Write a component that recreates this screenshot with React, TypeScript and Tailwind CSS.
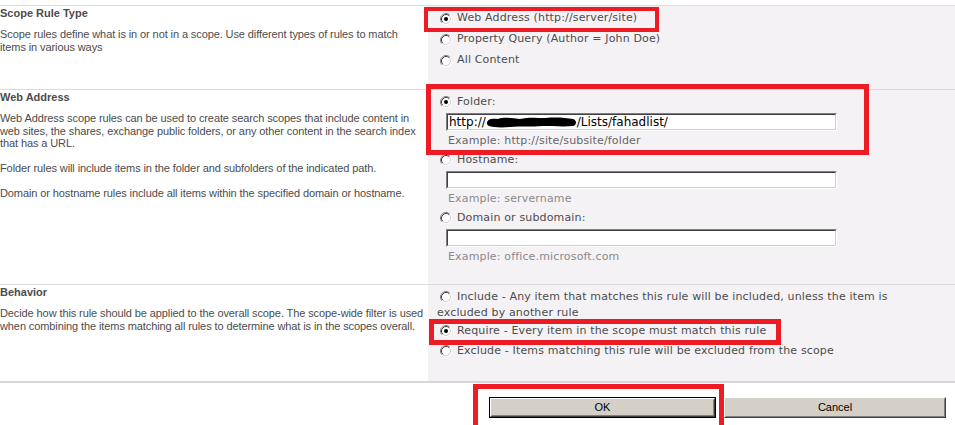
import type { ReactNode } from "react";

function Radio({ checked = false }: { checked?: boolean }) {
    return (
        <svg width="12" height="12" viewBox="0 0 12 12" className="shrink-0">
            <circle cx="6" cy="6" r="5" fill="#fff" />
            <path d="M2.11 9.89A5.5 5.5 0 0 1 9.89 2.11" stroke="#808080" fill="none" />
            <path d="M9.89 2.11A5.5 5.5 0 0 1 2.11 9.89" stroke="#ffffff" fill="none" />
            <path d="M2.82 9.18A4.5 4.5 0 0 1 9.18 2.82" stroke="#404040" fill="none" />
            <path d="M9.18 2.82A4.5 4.5 0 0 1 2.82 9.18" stroke="#d4d0c8" fill="none" />
            {checked && <circle cx="6" cy="6" r="2" fill="#000" />}
        </svg>
    );
}

function Option({ checked, children, h = "h-[21px]" }: { checked?: boolean; children: ReactNode; h?: string }) {
    return (
        <div className={`flex ${h} items-center gap-[5px] whitespace-nowrap`}>
            <Radio checked={checked} />
            <span>{children}</span>
        </div>
    );
}

function Field({ children }: { children?: ReactNode }) {
    return (
        <div className="ml-[6px] mt-[1px] h-[18px] w-[391px] border border-t-[#808080] border-l-[#808080] border-r-white border-b-white">
            <div className="flex h-full items-center overflow-hidden whitespace-nowrap border border-t-[#404040] border-l-[#404040] border-r-[#d4d0c8] border-b-[#d4d0c8] bg-white pl-[1px] text-[12px] tracking-normal text-black">
                {children}
            </div>
        </div>
    );
}

function Example({ children, tone = "text-[#8a8a8a]" }: { children: ReactNode; tone?: string }) {
    return <div className={`ml-[8px] h-[19px] leading-[19px] ${tone}`}>{children}</div>;
}

function Label({ title, children }: { title: string; children: ReactNode }) {
    return (
        <div className="w-[428px] shrink-0 pt-[1px] font-['Liberation_Sans',Arial,sans-serif] text-[11px] text-[#4c4c4c]">
            <div className="whitespace-nowrap">
                <div className="font-bold leading-[13px]">{title}</div>
                <div className="mt-[8px] leading-[12.5px] tracking-[-0.1px]">{children}</div>
            </div>
        </div>
    );
}

const panel = "flex-1 bg-[#f5f2f6] pl-[12px] pt-[2px] font-['DejaVu_Sans',Verdana,sans-serif] text-[11px] tracking-[0.15px] text-[#4c4c4c]";

export default function App() {
    return (
        <div className="relative h-[425px] w-[955px] overflow-hidden bg-white">
            <div className="h-[5px]" />

            {/* Scope rule type */}
            <div className="flex h-[84px] border-t border-[#dcdcdc]">
                <Label title="Scope Rule Type">
                    Scope rules define what is in or not in a scope. Use different types of rules to match
                    <br />
                    items in various ways
                </Label>
                <div className={panel}>
                    <Option checked>Web Address (http://server/site)</Option>
                    <Option>Property Query (Author = John Doe)</Option>
                    <Option>All Content</Option>
                </div>
            </div>

            {/* Web address */}
            <div className="flex h-[195px] border-t border-[#dcdcdc]">
                <Label title="Web Address">
                    Web Address scope rules can be used to create search scopes that include content in
                    <br />
                    web sites, the shares, exchange public folders, or any other content in the search index
                    <br />
                    that has a URL.
                    <br />
                    <br />
                    Folder rules will include items in the folder and subfolders of the indicated path.
                    <br />
                    <br />
                    Domain or hostname rules include all items within the specified domain or hostname.
                </Label>
                <div className={panel}>
                    <Option checked h="h-[20px]">Folder:</Option>
                    <Field>
                        <span>http://</span>
                        <svg width="91" height="12" viewBox="0 0 91 12" className="shrink-0">
                            <path
                                d="M1 7C1 3 6 2 12 3C18 1 26 2 34 3C42 1 52 2 60 2C70 1 80 2 87 3C91 4 91 9 87 10C78 11 66 10 56 10C46 11 34 10 24 11C14 12 6 11 3 10C1 9 1 8 1 7Z"
                                fill="#000"
                            />
                        </svg>
                        <span>/Lists/fahadlist/</span>
                    </Field>
                    <Example tone="text-[#666]">Example: http://site/subsite/folder</Example>
                    <Option h="h-[20px]">Hostname:</Option>
                    <Field />
                    <Example>Example: servername</Example>
                    <Option h="h-[20px]">Domain or subdomain:</Option>
                    <Field />
                    <Example>Example: office.microsoft.com</Example>
                </div>
            </div>

            {/* Behavior */}
            <div className="flex h-[99px] border-t border-b-2 border-t-[#dcdcdc] border-b-[#d6d6d6]">
                <Label title="Behavior">
                    Decide how this rule should be applied to the overall scope. The scope-wide filter is used
                    <br />
                    when combining the items matching all rules to determine what is in the scopes overall.
                </Label>
                <div className={panel}>
                    <Option h="h-[20px]">Include - Any item that matches this rule will be included, unless the item is</Option>
                    <div className="-ml-[3px] h-[12px] leading-[12px]">excluded by another rule</div>
                    <div className="mt-[2px]">
                        <Option checked h="h-[20px]">Require - Every item in the scope must match this rule</Option>
                    </div>
                    <Option h="h-[20px]">Exclude - Items matching this rule will be excluded from the scope</Option>
                </div>
            </div>

            {/* Buttons */}
            <div className="flex justify-end gap-[8px] pr-[9px] pt-[14px] font-['Liberation_Sans',Arial,sans-serif] text-[11px] text-black">
                <button className="h-[21px] w-[227px] border border-black">
                    <div className="h-full border border-t-white border-l-white border-r-[#404040] border-b-[#404040] bg-[#d4d0c8]">
                        <div className="flex h-full items-center justify-center border border-t-[#d4d0c8] border-l-[#d4d0c8] border-r-[#808080] border-b-[#808080]">
                            OK
                        </div>
                    </div>
                </button>
                <button className="h-[21px] w-[222px] border border-t-white border-l-white border-r-[#404040] border-b-[#404040] bg-[#d4d0c8]">
                    <div className="flex h-full items-center justify-center border border-t-[#d4d0c8] border-l-[#d4d0c8] border-r-[#808080] border-b-[#808080]">
                        Cancel
                    </div>
                </button>
            </div>

            {/* Red annotation boxes */}
            <div className="absolute left-[424px] top-[7px] h-[25px] w-[235px] border-4 border-[#ed1c24]" />
            <div className="absolute left-[426px] top-[84px] h-[71px] w-[443px] border-[5px] border-[#ed1c24]" />
            <div className="absolute left-[429px] top-[319px] h-[26px] w-[352px] border-[5px] border-[#ed1c24]" />
            <div className="absolute left-[473px] top-[384px] h-[42px] w-[251px] border-[5px] border-b-0 border-[#ed1c24]" />
        </div>
    );
}
